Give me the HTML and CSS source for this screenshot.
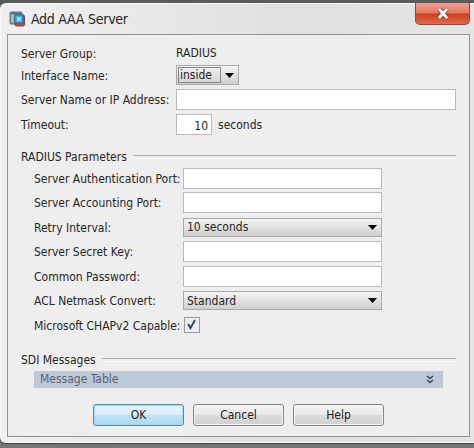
FILE: index.html
```html
<!DOCTYPE html>
<html lang="en">
<head>
<meta charset="utf-8">
<title>Add AAA Server</title>
<link rel="stylesheet" href="styles.css">
</head>
<body>
<main class="window">
  <header class="titlebar">
    <svg class="app-icon" width="17" height="16" viewBox="0 0 17 16">
      <rect x="1" y="1" width="12" height="12" rx="1" fill="#7fa39e" stroke="#587177"/>
      <path d="M1.5 2.5h11" stroke="#536b73"/>
      <path d="M2.5 5h2M2.5 7.5h2M2.5 10h2" stroke="#c3e6cf" stroke-width="1.4"/>
      <rect x="6" y="4" width="9.5" height="11" rx="1.5" fill="#c8414a" stroke="#7c4358"/>
      <rect x="6" y="4" width="8" height="8" fill="#3cb4e2" stroke="#376b91"/>
      <path d="M8 7h4M8 9h4" stroke="#9deaff" stroke-width="1.3"/>
    </svg>
    <h1 class="title">Add AAA Server</h1>
    <button class="close" aria-label="Close">
      <svg width="14" height="13" viewBox="0 0 14 13"><path d="M3 2l8 9M11 2l-8 9" stroke="#744039" stroke-width="4.6"/><path d="M3 2l8 9M11 2l-8 9" stroke="#fff" stroke-width="2.8"/></svg>
    </button>
  </header>
  <form class="panel">
    <section class="general">
      <div class="row row-group"><span class="label">Server Group:</span><span>RADIUS</span></div>
      <div class="row row-interface"><span class="label">Interface Name:</span><div class="combo combo-small"><span class="focus">inside</span><svg class="arrow" width="9" height="5"><path d="M0 0h9L4.5 5z"/></svg></div></div>
      <div class="row row-name"><span class="label">Server Name or IP Address:</span><div class="field wide"></div></div>
      <div class="row row-timeout"><span class="label">Timeout:</span><div class="field number">10</div><span class="unit">seconds</span></div>
    </section>
    <h2 class="heading radius-heading">RADIUS Parameters</h2>
    <section class="params">
      <div class="row"><span class="label">Server Authentication Port:</span><div class="field"></div></div>
      <div class="row"><span class="label">Server Accounting Port:</span><div class="field"></div></div>
      <div class="row"><span class="label">Retry Interval:</span><div class="combo">10 seconds<svg class="arrow" width="9" height="5"><path d="M0 0h9L4.5 5z"/></svg></div></div>
      <div class="row"><span class="label">Server Secret Key:</span><div class="field"></div></div>
      <div class="row"><span class="label">Common Password:</span><div class="field"></div></div>
      <div class="row"><span class="label">ACL Netmask Convert:</span><div class="combo">Standard<svg class="arrow" width="9" height="5"><path d="M0 0h9L4.5 5z"/></svg></div></div>
      <div class="row"><span class="label">Microsoft CHAPv2 Capable:</span><div class="check"><svg width="13" height="13" viewBox="0 0 13 13"><path d="M3 6l2.5 4L10 2" fill="none" stroke="#3d4568" stroke-width="2"/></svg></div></div>
    </section>
    <h2 class="heading sdi-heading">SDI Messages</h2>
    <div class="message-bar">Message Table<svg width="8" height="9" viewBox="0 0 8 9"><path d="M1 1l3 2.5L7 1M1 5l3 2.5L7 5" fill="none" stroke="#34455e" stroke-width="1.5"/></svg></div>
    <footer class="actions"><button class="btn primary" type="button">OK</button><button class="btn" type="button">Cancel</button><button class="btn" type="button">Help</button></footer>
  </form>
</main>
</body>
</html>
```
FILE: styles.css
```css
* { box-sizing: border-box; }
body {
  margin: 0;
  height: 448px;
  padding: 3px 0 5px;
  overflow: hidden;
  background: linear-gradient(#5c5c5c 0 50%, #777 50%);
  color: #262626;
  font: 12px/16px "DejaVu Sans Condensed", "DejaVu Sans", sans-serif;
  font-stretch: condensed;
}
.window {
  height: 440px;
  padding: 0 4px 0 7px;
  border: solid #f8f8f8;
  border-width: 1px 0 1px 1px;
  border-radius: 6px 0 0 6px;
  background: linear-gradient(90deg, #f0f0f0, #e0e0e0 60%, #e4e4e4);
  box-shadow: 0 1px 1px #444;
}
.titlebar { display: flex; height: 30px; padding-left: 1px; }
.app-icon { margin: 7px 5px 0 0; }
.title { margin: 7px 0 0; font-size: 14px; line-height: 17px; font-weight: 400; letter-spacing: -.25px; }
.close {
  display: grid;
  place-items: center;
  width: 55px;
  height: 22px;
  margin: -1px 0 0 auto;
  padding: 0;
  border: 1px solid #984438;
  border-top: 0;
  border-radius: 0 0 5px 5px;
  background: linear-gradient(#efa08d, #df7a60 48%, #cc3f20 52%, #e66a43);
}
.panel { height: 403px; margin-left: -1px; padding: 8px 13px 0; border: 1px solid #929292; background: #eee; }
.row { display: flex; align-items: center; }
.label { flex: none; padding-top: 1px; white-space: nowrap; }
.general .label { width: 155px; }
.row-group { height: 20px; }
.row-interface { height: 24px; }
.row-name { height: 25px; }
.row-timeout { height: 25px; }
.field { width: 199px; height: 21px; border: 1px solid #bababa; background: #fff; }
.field.wide { width: 280px; }
.field.number { width: 36px; padding: 3px 3px 0; text-align: right; }
.unit { margin-left: 6px; padding-top: 1px; }
.combo {
  display: flex;
  align-items: center;
  width: 199px;
  height: 19px;
  padding: 0 4px 0 3px;
  border: 1px solid #aaa;
  background: linear-gradient(#f4f4f4, #e2e2e2 50%, #d0d0d0);
}
.arrow { margin-left: auto; fill: #000; }
.combo-small { width: 63px; height: 20px; padding-left: 1px; }
.focus { width: 43px; height: 16px; padding-left: 1px; border: 1px solid #888; line-height: 15px; }
.heading { display: flex; align-items: center; gap: 6px; height: 16px; margin: 0; font-size: 12px; font-weight: 400; white-space: nowrap; }
.heading::after { content: ""; height: 2px; flex: 1; border-top: 1px solid #aeaeae; border-bottom: 1px solid #f8f8f8; }
.radius-heading { margin-top: 12px; }
.params { display: grid; grid-template-rows: repeat(7, 24.5px); margin: 1px 0 0 13px; }
.params .label { width: 149px; }
.check { width: 16px; height: 16px; margin-left: 1px; border: 1px solid #9a9aa0; background: #edeef5; }
.check svg { display: block; }
.sdi-heading { margin-top: 14px; }
.message-bar { display: flex; align-items: center; justify-content: space-between; height: 17px; margin: 3px 13px 0; padding: 0 9px 0 6px; background: #bdc9d6; color: #566372; }
.actions { display: flex; gap: 9px; margin: 16px 0 0 72px; }
.btn {
  width: 91px;
  height: 22px;
  padding: 0;
  border: 1px solid #858585;
  border-radius: 3px;
  background: linear-gradient(#f3f3f3, #e9e9e9 48%, #dadada 52%, #d2d2d2);
  box-shadow: inset 0 0 0 1px #f4f4f4;
  color: #222;
  font: inherit;
}
.primary { border-color: #568ba6; background: linear-gradient(#e9f4fb, #dceefa 48%, #c1e2f5 52%, #afd9ef); box-shadow: inset 0 0 0 1px #9cddf5; }
```
